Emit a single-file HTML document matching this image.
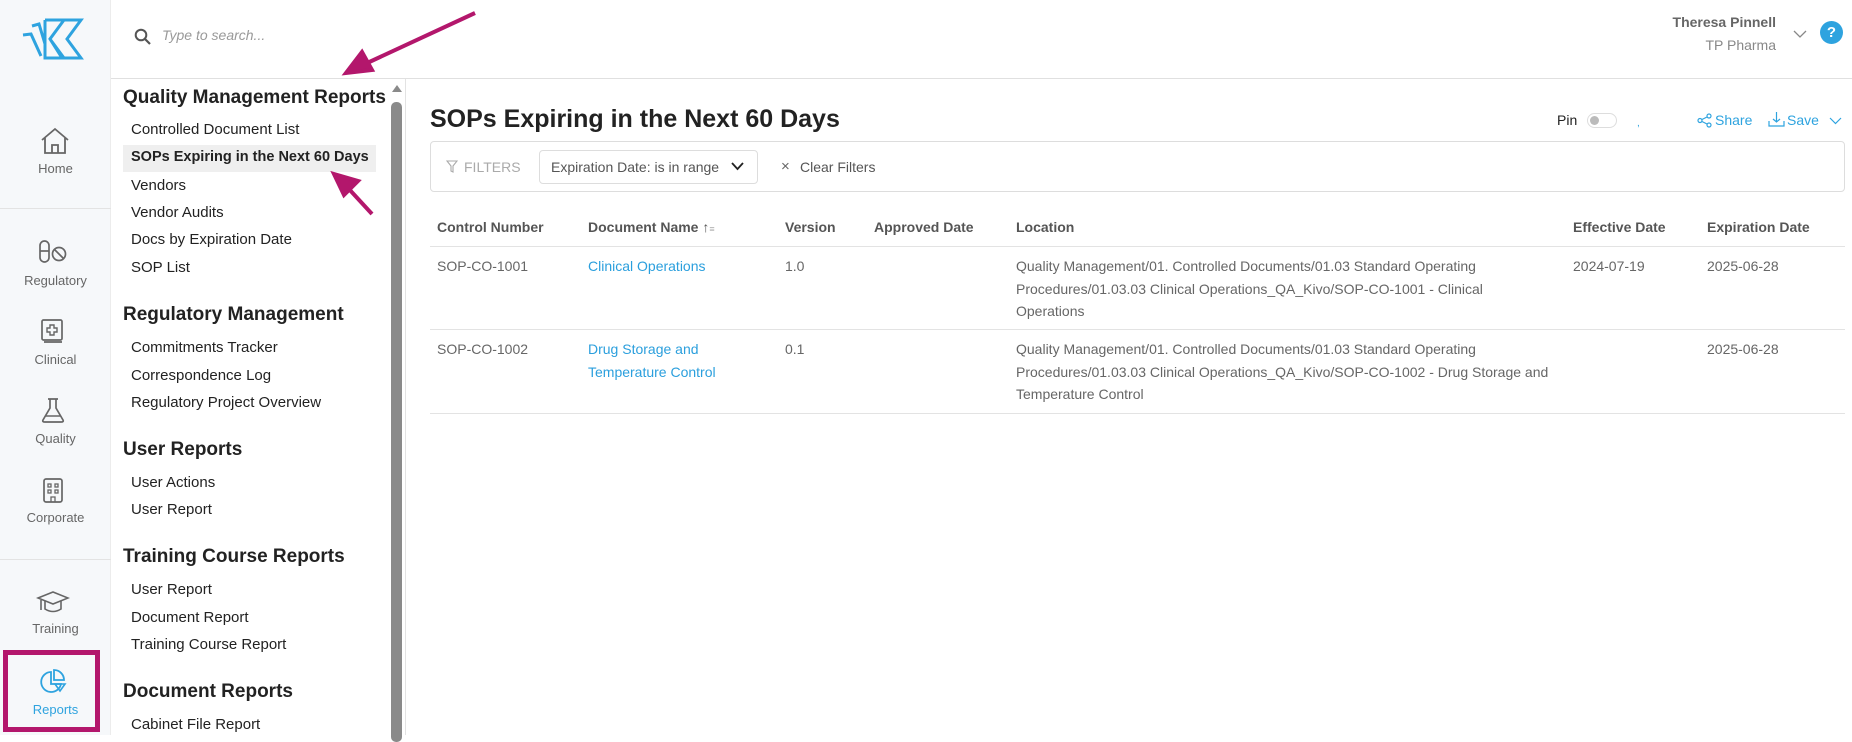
<!DOCTYPE html>
<html><head><meta charset="utf-8"><style>
*{margin:0;padding:0;box-sizing:border-box}
body{width:1852px;height:735px;overflow:hidden;background:#fff;font-family:"Liberation Sans",sans-serif;position:relative;color:#333}
.a{position:absolute;white-space:nowrap}
.rail{position:absolute;left:0;top:0;width:111px;height:735px;background:#f6f8fa;border-right:1px solid #ececec}
.rl{position:absolute;width:111px;text-align:center;font-size:13px;color:#666}
.ic{position:absolute;left:40px}
.mi{position:absolute;left:131px;font-size:15px;color:#222}
.mh{position:absolute;left:123px;font-size:19px;font-weight:bold;color:#222}
.th{position:absolute;top:219px;font-size:14px;font-weight:bold;color:#555}
.td{position:absolute;font-size:14px;color:#666;line-height:22.5px}
.lk{color:#2b9fdd}
</style></head><body>
<div class="rail"></div>
<svg class="a" style="left:0;top:0" width="111" height="80" viewBox="0 0 111 80"><g fill="none" stroke="#2ea3df" stroke-width="3"><polyline points="23,35 31,34 41,56"/><polyline points="32,26 39,24 45,44"/><path d="M45 20 V58 H62 L50 39 L64 20 H81 L67 39 L81 58 H64 L50 39 M45 20 H64"/></g></svg>
<div style="position:absolute;left:0;top:208px;width:111px;border-top:1px solid #e3e3e3"></div>
<div style="position:absolute;left:0;top:559px;width:111px;border-top:1px solid #e3e3e3"></div>
<svg class="ic" style="top:127px;left:39px" width="32" height="28" viewBox="0 0 32 28"><path d="M3 13 L16 2 L29 13 M6 11 V26 H26 V11 M13 26 V18 H19 V26" fill="none" stroke="#666" stroke-width="1.8"/></svg>
<div class="rl" style="top:161px">Home</div>
<svg class="ic" style="top:239px;left:38px" width="30" height="26" viewBox="0 0 30 26"><rect x="2" y="2" width="9" height="21" rx="4.5" fill="none" stroke="#666" stroke-width="1.7"/><line x1="2" y1="12" x2="11" y2="12" stroke="#666" stroke-width="1.7"/><circle cx="21" cy="15" r="6.5" fill="none" stroke="#666" stroke-width="1.7"/><line x1="16.5" y1="10.5" x2="25.5" y2="19.5" stroke="#666" stroke-width="1.7"/></svg>
<div class="rl" style="top:273px">Regulatory</div>
<svg class="ic" style="top:318px;left:40px" width="24" height="26" viewBox="0 0 24 26"><rect x="2" y="2" width="20" height="20" rx="1.5" fill="none" stroke="#666" stroke-width="1.7"/><path d="M4 24 H22" stroke="#666" stroke-width="1.7"/><path d="M10 7 H14 V10 H17 V14 H14 V17 H10 V14 H7 V10 H10Z" fill="none" stroke="#666" stroke-width="1.4"/></svg>
<div class="rl" style="top:352px">Clinical</div>
<svg class="ic" style="top:397px;left:40px" width="26" height="27" viewBox="0 0 26 27"><path d="M8 2 H18 M10 2 V11 L3 23 Q2 25 5 25 H21 Q24 25 23 23 L16 11 V2" fill="none" stroke="#666" stroke-width="1.7"/><path d="M5 19 H21" stroke="#666" stroke-width="1.5"/></svg>
<div class="rl" style="top:431px">Quality</div>
<svg class="ic" style="top:477px;left:42px" width="22" height="27" viewBox="0 0 22 27"><rect x="2" y="2" width="18" height="23" rx="2" fill="none" stroke="#666" stroke-width="1.7"/><g fill="none" stroke="#666" stroke-width="1.3"><rect x="6" y="7" width="3" height="3"/><rect x="13" y="7" width="3" height="3"/><rect x="6" y="13" width="3" height="3"/><rect x="13" y="13" width="3" height="3"/><path d="M9 25 V20 H13 V25"/></g></svg>
<div class="rl" style="top:510px">Corporate</div>
<svg class="ic" style="top:589px;left:36px" width="34" height="26" viewBox="0 0 34 26"><path d="M2 9 L17 3 L32 9 L17 15 Z" fill="none" stroke="#666" stroke-width="1.6"/><path d="M9 12 V20 Q17 25 25 20 V12" fill="none" stroke="#666" stroke-width="1.6"/><path d="M5 11 V21" stroke="#666" stroke-width="1.6"/></svg>
<div class="rl" style="top:621px">Training</div>
<div style="position:absolute;left:3px;top:650px;width:97px;height:82px;border:5px solid #b3176c"></div>
<svg class="ic" style="top:668px;left:39px" width="28" height="27" viewBox="0 0 28 27"><path d="M12 4 A10 10 0 1 0 22 16 H12 Z" fill="none" stroke="#2ea3df" stroke-width="1.8"/><path d="M15 2 A10 10 0 0 1 25 12 H15 Z" fill="none" stroke="#2ea3df" stroke-width="1.8"/><path d="M16 16 H26 L21 23 Z" fill="none" stroke="#2ea3df" stroke-width="1.6"/></svg>
<div class="rl" style="top:702px;color:#2ea3df">Reports</div>

<div style="position:absolute;left:111px;top:78px;width:1741px;border-top:1px solid #e0e0e0"></div>
<svg class="a" style="left:134px;top:28px" width="18" height="18" viewBox="0 0 18 18"><circle cx="7" cy="7" r="5.3" fill="none" stroke="#555" stroke-width="2"/><line x1="11" y1="11" x2="16" y2="16" stroke="#555" stroke-width="2.2"/></svg>
<div class="a" style="left:162px;top:27px;font-size:14px;font-style:italic;color:#999">Type to search...</div>
<div class="a" style="right:76px;top:14px;font-size:14px;font-weight:bold;color:#666">Theresa Pinnell</div>
<div class="a" style="right:76px;top:37px;font-size:14px;color:#888">TP Pharma</div>
<svg class="a" style="left:1793px;top:30px" width="14" height="9" viewBox="0 0 14 9"><polyline points="1,1 7,7 13,1" fill="none" stroke="#888" stroke-width="1.3"/></svg>
<div class="a" style="left:1820px;top:21px;width:23px;height:23px;border-radius:50%;background:#2ea3df;color:#fff;font-weight:bold;font-size:15px;text-align:center;line-height:23px">?</div>

<div class="mh" style="top:87px">Quality Management Reports</div>
<div style="position:absolute;left:123px;top:145px;width:253px;height:27px;background:#efefef"></div>
<div class="mi" style="top:121px">Controlled Document List</div>
<div class="mi" style="top:149px;font-weight:bold;font-size:14.5px">SOPs Expiring in the Next 60 Days</div>
<div class="mi" style="top:177px">Vendors</div>
<div class="mi" style="top:204px">Vendor Audits</div>
<div class="mi" style="top:231px">Docs by Expiration Date</div>
<div class="mi" style="top:259px">SOP List</div>
<div class="mh" style="top:304px">Regulatory Management</div>
<div class="mi" style="top:339px">Commitments Tracker</div>
<div class="mi" style="top:367px">Correspondence Log</div>
<div class="mi" style="top:394px">Regulatory Project Overview</div>
<div class="mh" style="top:439px">User Reports</div>
<div class="mi" style="top:474px">User Actions</div>
<div class="mi" style="top:501px">User Report</div>
<div class="mh" style="top:546px">Training Course Reports</div>
<div class="mi" style="top:581px">User Report</div>
<div class="mi" style="top:609px">Document Report</div>
<div class="mi" style="top:636px">Training Course Report</div>
<div class="mh" style="top:681px">Document Reports</div>
<div class="mi" style="top:716px">Cabinet File Report</div>
<div style="position:absolute;left:405px;top:79px;height:656px;border-left:1px solid #e3e3e3"></div>
<svg class="a" style="left:391px;top:84px" width="12" height="9" viewBox="0 0 12 9"><path d="M1 8 L6 1 L11 8Z" fill="#8a8a8a"/></svg>
<div style="position:absolute;left:391px;top:102px;width:11px;height:640px;background:#8a8a8a;border-radius:5px"></div>

<div class="a" style="left:430px;top:105px;font-size:25px;color:#222;font-weight:bold">SOPs Expiring in the Next 60 Days</div>
<div class="a" style="left:1557px;top:112px;font-size:14px;color:#222">Pin</div>
<div style="position:absolute;left:1587px;top:113px;width:30px;height:15px;border:1px solid #ddd;border-radius:8px"></div>
<div style="position:absolute;left:1590px;top:116px;width:9px;height:9px;border-radius:50%;background:#bbb"></div>
<div class="a" style="left:1637px;top:118px;font-size:10px;color:#2ea3df">,</div>
<svg class="a" style="left:1697px;top:113px" width="15" height="15" viewBox="0 0 15 15"><g fill="none" stroke="#2ea3df" stroke-width="1.2"><circle cx="3" cy="7.5" r="2"/><circle cx="12" cy="3" r="2"/><circle cx="12" cy="12" r="2"/><path d="M5 6.5 L10 4 M5 8.5 L10 11"/></g></svg>
<div class="a" style="left:1715px;top:112px;font-size:14px;color:#2ea3df">Share</div>
<svg class="a" style="left:1768px;top:111px" width="17" height="17" viewBox="0 0 17 17"><g fill="none" stroke="#2ea3df" stroke-width="1.2"><path d="M8.5 1 V11 M5 8 L8.5 11 L12 8"/><path d="M1 10 V15 H16 V10"/></g></svg>
<div class="a" style="left:1787px;top:112px;font-size:14px;color:#2ea3df">Save</div>
<svg class="a" style="left:1829px;top:117px" width="13" height="8" viewBox="0 0 13 8"><polyline points="1,1 6.5,6.5 12,1" fill="none" stroke="#2ea3df" stroke-width="1.2"/></svg>

<div style="position:absolute;left:430px;top:141px;width:1415px;height:51px;border:1px solid #ddd;border-radius:4px"></div>
<svg class="a" style="left:446px;top:160px" width="12" height="13" viewBox="0 0 12 13"><path d="M1 1 H11 L7 6 V12 L5 11 V6 Z" fill="none" stroke="#aaa" stroke-width="1.1"/></svg>
<div class="a" style="left:464px;top:159px;font-size:14px;color:#aaa">FILTERS</div>
<div style="position:absolute;left:539px;top:150px;width:219px;height:34px;border:1px solid #ddd;border-radius:4px"></div>
<div class="a" style="left:551px;top:159px;font-size:14px;color:#555">Expiration Date: is in range</div>
<svg class="a" style="left:731px;top:162px" width="13" height="9" viewBox="0 0 13 9"><polyline points="1,1 6.5,7 12,1" fill="none" stroke="#222" stroke-width="1.8"/></svg>
<div class="a" style="left:781px;top:158px;font-size:15px;color:#666">×</div>
<div class="a" style="left:800px;top:159px;font-size:14px;color:#555">Clear Filters</div>

<div class="th" style="left:437px">Control Number</div>
<div class="th" style="left:588px">Document Name <span style="font-weight:bold">↑</span><span style="font-size:9px;color:#aaa">≡</span></div>
<div class="th" style="left:785px">Version</div>
<div class="th" style="left:874px">Approved Date</div>
<div class="th" style="left:1016px">Location</div>
<div class="th" style="left:1573px">Effective Date</div>
<div class="th" style="left:1707px">Expiration Date</div>
<div style="position:absolute;left:430px;top:246px;width:1415px;border-top:1px solid #e3e3e3"></div>
<div style="position:absolute;left:430px;top:329px;width:1415px;border-top:1px solid #e3e3e3"></div>
<div style="position:absolute;left:430px;top:413px;width:1415px;border-top:1px solid #e3e3e3"></div>
<div class="td" style="left:437px;top:255px">SOP-CO-1001</div>
<div class="td lk" style="left:588px;top:255px">Clinical Operations</div>
<div class="td" style="left:785px;top:255px">1.0</div>
<div class="td" style="left:1016px;top:255px;width:535px">Quality Management/01. Controlled Documents/01.03 Standard Operating Procedures/01.03.03 Clinical Operations_QA_Kivo/SOP-CO-1001 - Clinical<br>Operations</div>
<div class="td" style="left:1573px;top:255px">2024-07-19</div>
<div class="td" style="left:1707px;top:255px">2025-06-28</div>
<div class="td" style="left:437px;top:338px">SOP-CO-1002</div>
<div class="td lk" style="left:588px;top:338px;width:160px">Drug Storage and Temperature Control</div>
<div class="td" style="left:785px;top:338px">0.1</div>
<div class="td" style="left:1016px;top:338px;width:545px">Quality Management/01. Controlled Documents/01.03 Standard Operating Procedures/01.03.03 Clinical Operations_QA_Kivo/SOP-CO-1002 - Drug Storage and Temperature Control</div>
<div class="td" style="left:1707px;top:338px">2025-06-28</div>

<svg class="a" style="left:0;top:0" width="1852" height="735" viewBox="0 0 1852 735"><g stroke="#b3176c" stroke-width="4" fill="#b3176c"><line x1="475" y1="13" x2="365" y2="64"/><path d="M346 73 L362 52 L372 70 Z"/><line x1="372" y1="214" x2="348" y2="188"/><path d="M334 174 L358 181 L344 195 Z"/></g></svg>
</body></html>
